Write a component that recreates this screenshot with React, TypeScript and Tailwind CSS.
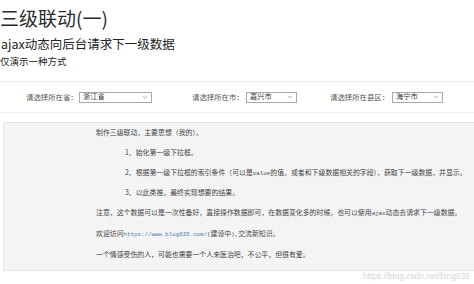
import React from "react";

const cjk = "font-['Noto_Sans_CJK_SC','Noto_Sans',sans-serif]";

function Chevron() {
  return (
    <svg width="6" height="4" viewBox="0 0 6 4" className="shrink-0">
      <path d="M0.8 0.8 L3 3 L5.2 0.8" fill="none" stroke="#999" strokeWidth="0.7" />
    </svg>
  );
}

function FakeSelect({ value, w }: { value: string; w: string }) {
  return (
    <div
      className={`${w} h-[11px] border border-[#a9a9a9] bg-white flex items-center justify-between pl-[3px] pr-[3px] text-[7.2px] leading-none text-[#333]`}
    >
      <span>{value}</span>
      <Chevron />
    </div>
  );
}

const mono = "font-['Liberation_Mono',monospace] text-[5.8px]";

export default function App() {
  return (
    <div className={`w-[474px] h-[284px] bg-white relative overflow-hidden ${cjk}`}>
      <div className="text-[19px] leading-[24px] pt-[6px] text-[#2a2a2a]">三级联动(一)</div>
      <div className="text-[12.5px] leading-[16px] mt-[6px] text-[#222] pl-[1px]">ajax动态向后台请求下一级数据</div>
      <div className="text-[9.5px] leading-[12px] mt-[3px] text-[#222]">仅演示一种方式</div>

      <div className="mt-[14px] border-t border-[#eeeeee] border-b h-[32px] flex items-center pl-[26px] text-[7.4px] text-[#555]">
        <span className="w-[53px] whitespace-nowrap">请选择所在省：</span>
        <FakeSelect value="浙江省" w="w-[73px]" />
        <span className="ml-[40px] w-[54px] whitespace-nowrap">请选择所在市：</span>
        <FakeSelect value="嘉兴市" w="w-[51px]" />
        <span className="ml-[33px] w-[62px] whitespace-nowrap">请选择所在县区：</span>
        <FakeSelect value="海宁市" w="w-[51px]" />
      </div>

      <div className="mt-[9px] ml-[3px] h-[149px] bg-[#f4f4f4] border border-[#e6e6e6] border-r-0 text-[6.9px] leading-[19.8px] text-[#444] pl-[92px]">
        <div>制作三级联动，主要思想（我的）。</div>
        <div className="pl-[29px]">1、始化第一级下拉框。</div>
        <div className="pl-[29px] whitespace-nowrap">
          2、根据第一级下拉框的索引条件（可以是<span className={mono}>value</span>的值，或者和下级数据相关的字段），获取下一级数据，并显示。
        </div>
        <div className="pl-[29px]">3、以此类推，最终实现想要的结果。</div>
        <div className="whitespace-nowrap">
          注意，这个数据可以是一次性备好，直接操作数据即可，在数据变化多的时候，也可以使用<span className={mono}>ajax</span>动态去请求下一级数据。
        </div>
        <div className="whitespace-nowrap">
          欢迎访问<span className={`${mono} text-[#4a78b0]`}>https://www.blog635.com/</span><span className={mono}>(</span>建设中<span className={mono}>),</span>交流新知识。
        </div>
        <div>一个情感受伤的人，可能也需要一个人来医治吧，不公平，但很有爱。</div>
      </div>

      <div className="absolute right-[4px] bottom-[3px] text-[8.4px] leading-[10px] text-[#d6d6d6] font-['Liberation_Sans',sans-serif]">
        https://blog.csdn.net/bing635
      </div>
    </div>
  );
}
